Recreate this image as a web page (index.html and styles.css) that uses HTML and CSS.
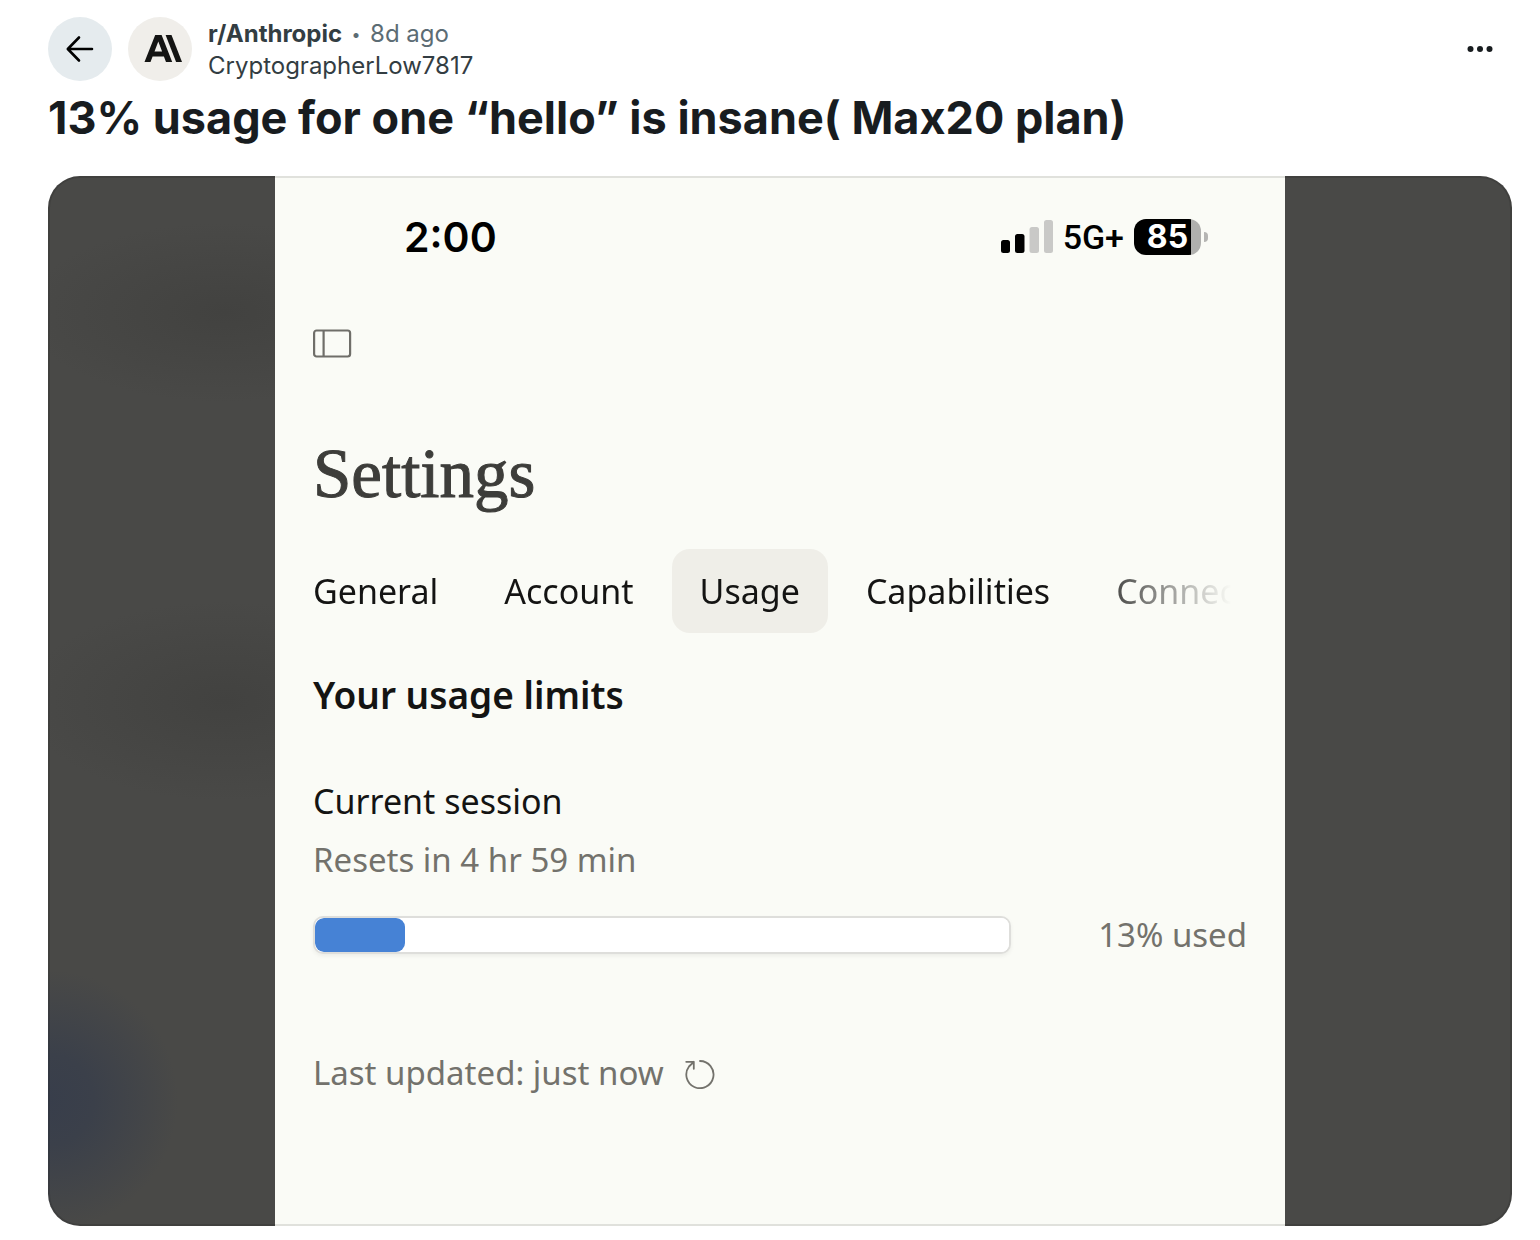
FILE: index.html
```html
<!DOCTYPE html>
<html lang="en">
<head>
<meta charset="utf-8">
<meta name="viewport" content="width=device-width, initial-scale=1">
<title>13% usage for one “hello” is insane( Max20 plan)</title>
<link rel="stylesheet" href="styles.css">
</head>
<body>
<article class="post">
  <header class="post-header">
    <button class="round back" type="button" aria-label="Back">
      <svg width="32" height="32" viewBox="0 0 32 32" fill="none" stroke="#000" stroke-width="2.6" stroke-linecap="round" stroke-linejoin="round"><path d="M28 16H4M15 4.500L3.800 16L15 27.500"/></svg>
    </button>
    <a class="round avatar" href="#community" aria-label="r/Anthropic">
      <svg width="40" height="28" viewBox="0 0 40 28" fill="#141413"><path fill-rule="evenodd" d="M11.200 0H17.600L28.200 27H22L19.900 21.400H8.600L6.500 27H.5ZM14.300 6.500L10.500 16.400H18.100Z"/><path d="M21.600 0H27.500L38 27H32.100Z"/></svg>
    </a>
    <div class="byline">
      <div class="line"><a class="community" href="#community">r/Anthropic</a><span class="dot">•</span><time class="age">8d ago</time></div>
      <a class="author" href="#author">CryptographerLow7817</a>
    </div>
    <button class="more" type="button" aria-label="More options">
      <svg width="32" height="32" viewBox="0 0 32 32" fill="#181c1f"><circle cx="6.500" cy="16" r="3"/><circle cx="16" cy="16" r="3"/><circle cx="25.500" cy="16" r="3"/></svg>
    </button>
  </header>
  <h1 class="post-title">13% usage for one “hello” is insane( Max20 plan)</h1>

  <div class="media">
    <section class="screen">
      <div class="status">
        <time class="clock">2:00</time>
        <div class="signals">
          <svg width="52" height="34" viewBox="0 0 52 34"><rect x="0" y="20" width="9" height="13" rx="2.500"/><rect x="14" y="14" width="9.500" height="19" rx="2.500"/><g fill="#c9c9c7"><rect x="28.500" y="7" width="9.500" height="26" rx="2.500"/><rect x="43" y="0" width="9" height="33" rx="2.500"/></g></svg>
          <span class="network">5G+</span>
          <span class="battery"><span class="level">85</span></span>
        </div>
      </div>

      <button class="sidebar-toggle" type="button" aria-label="Toggle sidebar">
        <svg width="39" height="30" viewBox="0 0 39 30" fill="none" stroke="#6f6e69" stroke-width="2.200"><rect x="1.100" y="1.500" width="36" height="26" rx="2.500"/><path d="M10.600 1.500V27.500"/></svg>
      </button>

      <h2 class="screen-title">Settings</h2>

      <nav class="tabs" aria-label="Settings sections">
        <button class="tab" type="button">General</button>
        <button class="tab" type="button">Account</button>
        <button class="tab active" type="button" aria-current="page">Usage</button>
        <button class="tab" type="button">Capabilities</button>
        <button class="tab" type="button">Connec</button>
      </nav>

      <h3 class="limits-title">Your usage limits</h3>
      <label class="session" for="session-usage">Current session</label>
      <p class="reset">Resets in 4 hr 59 min</p>
      <div class="usage">
        <progress class="meter" id="session-usage" max="100" value="13">13%</progress>
        <span class="used">13% used</span>
      </div>

      <div class="updated">
        <span>Last updated: just now</span>
        <button class="refresh" type="button" aria-label="Refresh">
          <svg width="32" height="32" viewBox="0 0 32 32" fill="none" stroke="#73726c" stroke-width="1.800" stroke-linecap="round" stroke-linejoin="round"><path d="M16 4A13.600 13.600 0 1 1 5 9.500L9.800 4.800M2.200 4.800H9.800V11.800"/></svg>
        </button>
      </div>
    </section>
  </div>
</article>
</body>
</html>
```

FILE: styles.css
```css
* {
  box-sizing: border-box;
}

body {
  margin: 0;
  background: #fff;
  color: #181c1f;
  font-family: Inter, "Liberation Sans", sans-serif;
}

button {
  padding: 0;
  border: 0;
  background: none;
  color: inherit;
  font: inherit;
  cursor: pointer;
}

a {
  color: inherit;
  text-decoration: none;
}

svg {
  display: block;
  flex: none;
}

.post {
  padding: 16px 28px 14px 48px;
}

/* Post header */
.post-header {
  display: flex;
  align-items: center;
  gap: 16px;
}

.round {
  display: flex;
  align-items: center;
  justify-content: center;
  flex: none;
  width: 64px;
  height: 64px;
  border-radius: 50%;
}

.back {
  background: #e5ebee;
}

.avatar {
  padding-left: 8px;
  background: #f0eeea;
}

.byline {
  flex: 1;
  padding-top: 2px;
  font-size: 24px;
  line-height: 32px;
  color: #333d42;
}

.line {
  display: flex;
  align-items: center;
}

.community {
  font-weight: 700;
}

.dot {
  width: 28px;
  text-align: center;
  font-size: 16px;
  color: #5c6c74;
}

.age {
  color: #5c6c74;
}

.more {
  padding: 16px;
}

.post-title {
  margin: 6px 0 28px;
  font-size: 45px;
  line-height: 60px;
  font-weight: 700;
}

/* Attached picture */
.media {
  display: flex;
  justify-content: center;
  overflow: hidden;
  border-radius: 32px;
  background:
    radial-gradient(ellipse 130px 130px at 0 88%, #383e4b 0%, #3b404a 35%, rgba(70, 72, 72, 0) 100%),
    radial-gradient(ellipse 200px 100px at 12% 50%, #424240, rgba(72, 72, 70, 0)),
    radial-gradient(ellipse 200px 90px at 12% 13%, #424240, rgba(72, 72, 70, 0)),
    #494947;
  box-shadow: inset 0 0 0 2px rgba(0, 0, 0, 0.12);
}

.screen {
  width: 100%;
  max-width: 1010px;
  padding: 39px 38px 127px;
  border: solid #e0e1dc;
  border-width: 2px 0;
  background: #fafbf6;
  color: #141413;
  font-family: "Noto Sans", "Liberation Sans", sans-serif;
  font-size: 34px;
  line-height: 48px;
}

.status {
  display: flex;
  align-items: center;
  justify-content: space-between;
  height: 40px;
  padding: 0 39px 0 91px;
  color: #000;
  font-family: Inter, "Liberation Sans", sans-serif;
}

.clock {
  font-size: 41px;
  font-weight: 600;
}

.signals {
  display: flex;
  align-items: center;
  gap: 10px;
}

.network {
  font-family: Roboto, "Liberation Sans", sans-serif;
  font-weight: 500;
}

.battery {
  display: flex;
  align-items: center;
}

.battery::after {
  content: "";
  width: 4px;
  height: 10px;
  margin-left: 3px;
  border-radius: 0 5px 5px 0;
  background: #b5b5b3;
}

.level {
  width: 67px;
  border-radius: 12px;
  background: linear-gradient(to right, #000 57px, #b0b0ae 57px);
  color: #fff;
  font-size: 32px;
  line-height: 36px;
  font-weight: 700;
  text-align: center;
}

.sidebar-toggle {
  display: block;
  margin-top: 72px;
}

.screen-title {
  margin: 75px 0 35px;
  color: #3d3d3a;
  font-family: "Liberation Serif", serif;
  font-size: 69px;
  line-height: 80px;
  font-weight: 400;
  -webkit-text-stroke: 1px #3d3d3a;
}

.tabs {
  display: flex;
  gap: 10px;
  margin-left: -28px;
  overflow: hidden;
  -webkit-mask-image: linear-gradient(to left, transparent 16px, #000 168px);
  mask-image: linear-gradient(to left, transparent 16px, #000 168px);
}

.tab {
  flex: none;
  height: 84px;
  padding: 0 28px;
  border-radius: 18px;
}

.active {
  background: #efeee8;
}

.limits-title {
  margin: 37px 0 57px;
  font-size: 37px;
  line-height: 50px;
  font-weight: 600;
}

.session {
  display: block;
}

.reset {
  margin: 11px 0 27px;
  color: #73726c;
  font-size: 33px;
}

.usage {
  display: flex;
  align-items: center;
  justify-content: space-between;
  gap: 32px;
  color: #73726c;
  font-size: 33px;
}

.meter {
  appearance: none;
  flex: 0 1 698px;
  min-width: 0;
  height: 38px;
  overflow: hidden;
  border: 2px solid #dededb;
  border-radius: 10px;
  background: #fff;
  box-shadow: 0 2px 4px rgba(0, 0, 0, 0.06);
}

.meter::-webkit-progress-bar {
  background: #fff;
}

.meter::-webkit-progress-value {
  border-radius: 9px;
  background: #4682d5;
}

.used {
  white-space: nowrap;
}

.updated {
  display: flex;
  align-items: center;
  gap: 20px;
  margin-top: 90px;
  color: #73726c;
  font-size: 33px;
}
```
